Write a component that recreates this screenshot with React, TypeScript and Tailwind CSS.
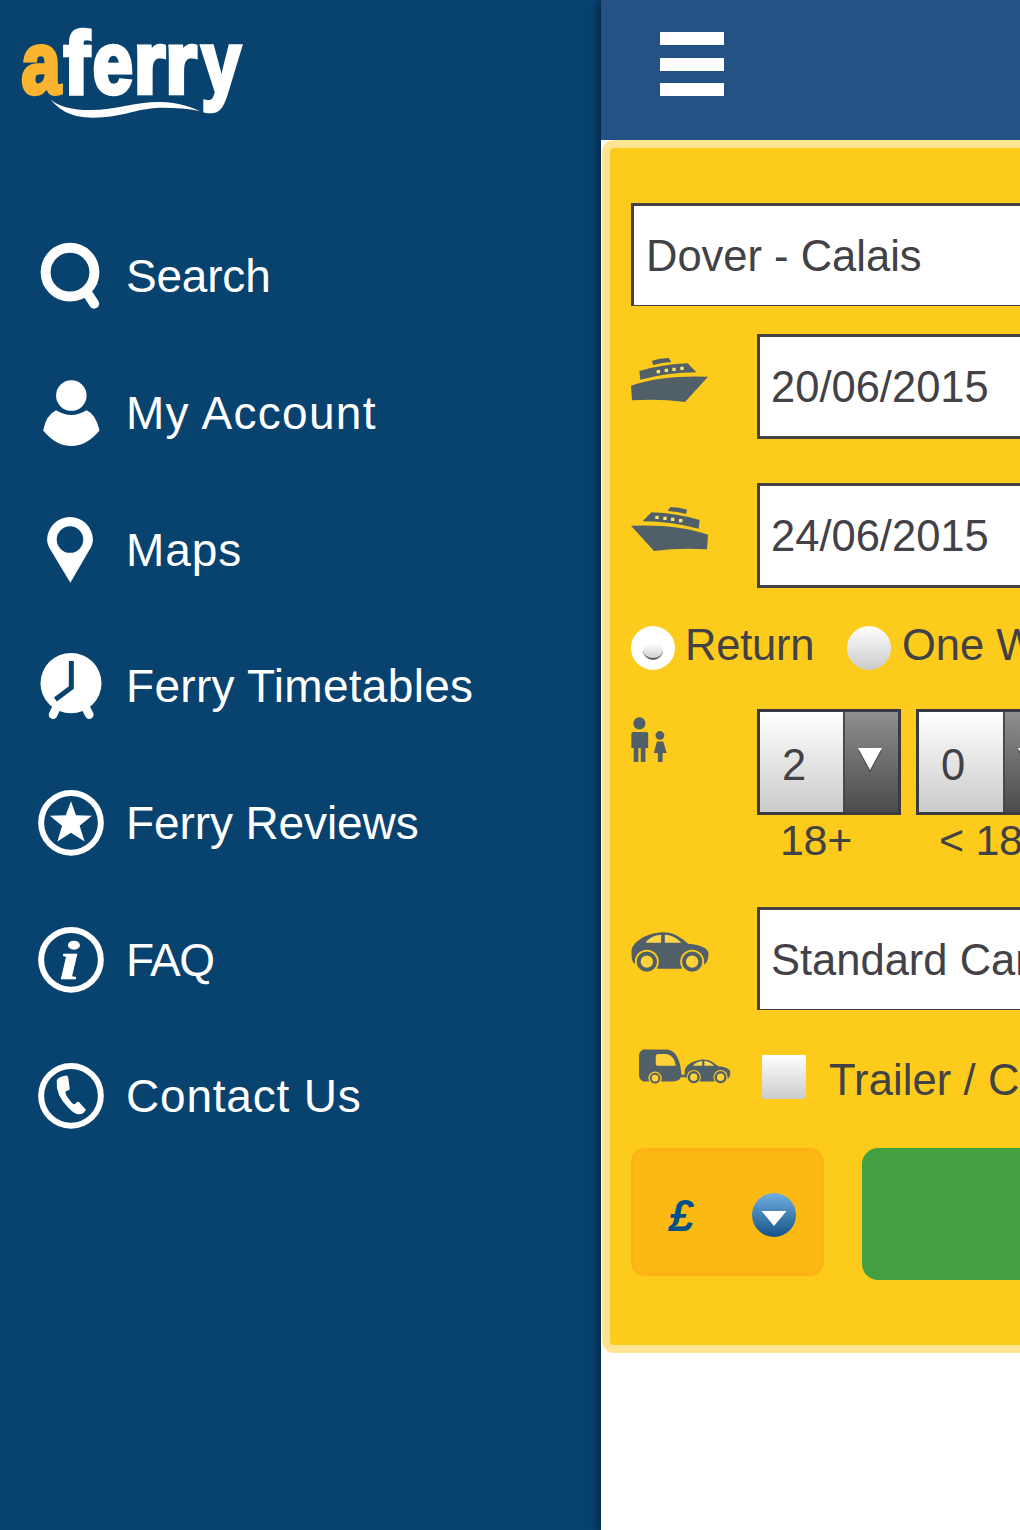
import type { ReactNode } from "react";

const menuItems = [
  { label: "Search", icon: SearchIcon, spacing: "tracking-[-0.2px]" },
  { label: "My Account", icon: AccountIcon, spacing: "tracking-[1.3px]" },
  { label: "Maps", icon: PinIcon, spacing: "tracking-[0.9px]" },
  { label: "Ferry Timetables", icon: ClockIcon, spacing: "tracking-[0.3px]" },
  { label: "Ferry Reviews", icon: StarIcon, spacing: "tracking-[-0.1px]" },
  { label: "FAQ", icon: InfoIcon, spacing: "tracking-[-1.5px]" },
  { label: "Contact Us", icon: PhoneIcon, spacing: "tracking-[0.8px]" },
];

const logoLetters = [
  { char: "a", x: 21.6, scale: 0.8, fill: "#fbb42f" },
  { char: "f", x: 63.8, scale: 0.88, fill: "#fff" },
  { char: "e", x: 92.8, scale: 0.82, fill: "#fff" },
  { char: "r", x: 133.8, scale: 0.92, fill: "#fff" },
  { char: "r", x: 165.2, scale: 0.92, fill: "#fff" },
  { char: "y", x: 201.6, scale: 0.8, fill: "#fff" },
];

function Logo() {
  return (
    <svg width="300" height="140" viewBox="0 0 300 140" className="block">
      <g
        fontFamily="Liberation Sans, sans-serif"
        fontWeight="bold"
        fontSize="88"
        strokeWidth="4.500"
      >
        {logoLetters.map((letter, index) => (
          <text
            key={index}
            transform={`translate(${letter.x} 92.5) scale(${letter.scale} 1)`}
            fill={letter.fill}
            stroke={letter.fill}
          >
            {letter.char}
          </text>
        ))}
      </g>
      <path
        d="M50.7 99.7Q63 110 90 110C117 110 133 102 160 102C180 102.500 190 107 200 111C187 108.500 173 107.500 160 107.700C133 109 123 117.500 93 117.700C70 117.300 60 110 50.700 99.700Z"
        fill="#fff"
      />
    </svg>
  );
}

function SearchIcon() {
  return (
    <svg
      viewBox="54 69 198 199"
      className="size-[66px] overflow-visible"
      fill="none"
      stroke="#fff"
    >
      <circle cx="150" cy="157" r="73.500" strokeWidth="30" />
      <path d="M200 217L223 252" strokeWidth="30" strokeLinecap="round" />
    </svg>
  );
}

function AccountIcon() {
  return (
    <svg viewBox="54 480 198 199" className="size-[66px]" fill="#fff">
      <circle cx="154" cy="527" r="46" />
      <path d="M108 571Q154 600 200 571Q228 583 239 632Q200 679 154 679Q108 679 69 632Q78 585 108 571Z" />
    </svg>
  );
}

function PinIcon() {
  return (
    <svg viewBox="54 49 198 199" className="size-[66px]" fill="#fff">
      <path
        fillRule="evenodd"
        d="M81 118A69 69 0 0 1 219 118Q219 132 207 151L151 247L93 151Q81 132 81 118ZM110 117A40 40 0 1 0 190 117A40 40 0 1 0 110 117Z"
      />
    </svg>
  );
}

function ClockIcon() {
  return (
    <svg viewBox="54 460 198 199" className="size-[66px]" fill="none">
      <path
        d="M110 622L99 646M196 622L208 646"
        stroke="#fff"
        strokeWidth="26"
        strokeLinecap="round"
      />
      <ellipse cx="153" cy="551" rx="92" ry="91" fill="#fff" />
      <path d="M154 484V564L106 600" stroke="#08426f" strokeWidth="15" />
    </svg>
  );
}

function Ring({ children }: { children: ReactNode }) {
  return (
    <svg viewBox="54 60 198 199" className="size-[66px]" fill="#fff">
      <circle cx="153" cy="159" r="90" fill="none" stroke="#fff" strokeWidth="18" />
      {children}
    </svg>
  );
}

function StarIcon() {
  return (
    <Ring>
      <path d="M153 94L168 136L216 138L179 168L194 215L153 189L112 215L126 168L89 138L137 136Z" />
    </Ring>
  );
}

function InfoIcon() {
  return (
    <Ring>
      <text
        x="118"
        y="218"
        fontFamily="Liberation Serif, serif"
        fontSize="164"
        fontWeight="bold"
        fontStyle="italic"
        textLength="61"
        lengthAdjust="spacingAndGlyphs"
        stroke="#fff"
        strokeWidth="2"
      >
        i
      </text>
    </Ring>
  );
}

function PhoneIcon() {
  return (
    <Ring>
      <path d="M139 98Q115 101 110 112Q106 157 145 195Q168 219 182 214Q192 213 198 201L176 177Q170 176 166 183Q160 187 155 179Q139 162 136 149Q137 143 144 143Q150 141 149 137L145 105Q143 98 139 98Z" />
    </Ring>
  );
}

function ShipIcon({ flipped = false }: { flipped?: boolean }) {
  return (
    <svg
      viewBox="93 115 231 132"
      className={flipped ? "mt-6 h-11 w-[77px] -scale-x-100" : "mt-6 h-11 w-[77px]"}
      fill="#515f68"
    >
      <path d="M156 123Q180 115 206 115L214 127Q185 129 159 136Z" />
      <path d="M118 154Q185 134 263 131L289 158Q200 159 121 180Z" />
      <path d="M93 198Q185 166 324 171L255 247Q175 236 96 242Z" />
      <path d="M170 151h10v10h-10zM194 147h10v10h-10zM217 144h10v10h-10zM241 141h10v10h-10z" fill="#ffe66b" />
    </svg>
  );
}

function PeopleIcon() {
  return (
    <svg viewBox="93 352 107 134" className="mt-2 h-[45px] w-9" fill="#515f68">
      <circle cx="118" cy="371" r="18" />
      <path d="M98 397H140Q144 397 144 402V444H136V486H122V444H115V486H101V444H94V402Q94 397 98 397Z" />
      <circle cx="179" cy="407" r="13" />
      <path d="M170 425H189L199 459H187V486H173V459H161Z" />
    </svg>
  );
}

function CarShape() {
  return (
    <g>
      <path
        d="M94 185C95 152 148 127 190 127C225 127 243 145 264 161C302 165 326 174 325 192Q324 216 314 222L240 236H175L105 222C94 216 94 200 94 185Z"
        fill="#515f68"
      />
      <path d="M136 158Q152 136 183 134V158ZM194 134Q220 134 244 158H194Z" fill="#ffd54a" />
      <circle cx="140" cy="215" r="36" fill="#fdcb1b" />
      <circle cx="276" cy="215" r="36" fill="#fdcb1b" />
      <circle cx="140" cy="215" r="24.500" fill="#ffd23a" stroke="#515f68" strokeWidth="12" />
      <circle cx="276" cy="215" r="24.500" fill="#ffd23a" stroke="#515f68" strokeWidth="12" />
    </g>
  );
}

function CarIcon() {
  return (
    <svg viewBox="93 126 233 120" className="mt-[25px] h-10 w-[78px]">
      <CarShape />
    </svg>
  );
}

function CaravanIcon() {
  return (
    <svg viewBox="118 476 275 104" className="-mt-[6px] ml-2 h-[35px] w-[92px]">
      <path
        d="M132 477H200C232 478 244 520 245 553H256V560H243Q238 573 215 573H132Q118 568 118 553V494Q120 480 132 477Z"
        fill="#515f68"
      />
      <path d="M176 491H200Q224 496 228 526H176Q168 526 168 518V499Q168 491 176 491Z" fill="#ffd23a" />
      <circle cx="166" cy="563" r="20" fill="#fdcb1b" />
      <circle cx="166" cy="563" r="13" fill="#ffd23a" stroke="#515f68" strokeWidth="6" />
      <g transform="translate(199 431) scale(0.59 0.6)">
        <CarShape />
      </g>
    </svg>
  );
}

function Field({ children }: { children: ReactNode }) {
  return (
    <div className="flex h-[105px] w-[300px] items-center border-[3px] border-[#434347] bg-white pt-[3px] pl-[11px] whitespace-nowrap">
      {children}
    </div>
  );
}

function CountSelect({ value, label, wide }: { value: string; label: string; wide?: boolean }) {
  return (
    <div className="w-36 shrink-0">
      <div className="flex h-[106px] border-[3px] border-[#3a3a42]">
        <div
          className={`flex shrink-0 items-center bg-linear-to-b from-white to-[#cbcbcb] pt-[7px] pl-[22px] ${
            wide ? "w-[84px]" : "w-[83px]"
          }`}
        >
          {value}
        </div>
        <div className="flex flex-1 justify-center border-l-2 border-[#4a4a4a] bg-linear-to-b from-[#8f8f8f] to-[#4c4c4c] pt-9 pr-[3px]">
          <svg viewBox="0 0 26 24" className="h-6 w-[26px]">
            <path d="M1 2H25L13 24Z" fill="#444" />
            <path d="M1 0H25L13 22Z" fill="#fff" />
          </svg>
        </div>
      </div>
      <div className="h-[52px] pl-[23px] text-[43px] leading-[50px] tracking-[-0.3px] whitespace-nowrap">
        {label}
      </div>
    </div>
  );
}

function Sidebar() {
  return (
    <aside className="h-full w-[601px] shrink-0 bg-[#08426f]">
      <Logo />
      <nav className="pt-[68px]">
        {menuItems.map((item) => (
          <a key={item.label} className="flex h-[136.700px] items-center pl-[38px]">
            <item.icon />
            <span
              className={`ml-[22px] text-[46px] leading-none whitespace-nowrap text-white ${item.spacing}`}
            >
              {item.label}
            </span>
          </a>
        ))}
      </nav>
    </aside>
  );
}

function SearchForm() {
  return (
    <form className="h-[1213px] w-[500px] rounded-[12px] border-8 border-[#ffe491] bg-[#fdcb1b] pt-[55px] pl-[21px] text-[43.500px] leading-none text-[#414146]">
      <div className="flex h-[103px] w-[450px] items-center border-[3px] border-b border-[#434347] bg-white pt-[3px] pl-3">
        Dover - Calais
      </div>
      <div className="mt-7 flex">
        <div className="w-[126px] shrink-0">
          <ShipIcon />
        </div>
        <Field>20/06/2015</Field>
      </div>
      <div className="mt-11 flex">
        <div className="w-[126px] shrink-0">
          <ShipIcon flipped />
        </div>
        <Field>24/06/2015</Field>
      </div>

      {/* Journey type */}
      <div className="mt-[38px] flex h-11 items-center whitespace-nowrap">
        <span className="flex size-11 shrink-0 items-center justify-center rounded-full bg-white">
          <span className="mt-1 size-5 rounded-full border-b-2 border-[#555] bg-linear-to-b from-white from-20% to-[#d0d0d0]" />
        </span>
        <span className="mb-[5px] w-[172px] shrink-0 pl-[10px] tracking-[-0.200px]">Return</span>
        <span className="size-11 shrink-0 rounded-full bg-linear-to-b from-white to-[#cbcbcb]" />
        <span className="mb-[5px] pl-[11px]">One Way</span>
      </div>

      {/* Passengers */}
      <div className="mt-[39px] flex">
        <div className="w-[126px] shrink-0">
          <PeopleIcon />
        </div>
        <div className="flex gap-[15px]">
          <CountSelect value="2" label="18+" />
          <CountSelect value="0" label="< 18" wide />
        </div>
      </div>

      {/* Vehicle */}
      <div className="mt-10 flex h-[103px]">
        <div className="w-[126px] shrink-0">
          <CarIcon />
        </div>
        <div className="flex w-[300px] items-center border-[3px] border-b border-[#434347] bg-white pt-[3px] pl-[11px] whitespace-nowrap">
          Standard Car
        </div>
      </div>
      <div className="mt-[45px] flex h-11">
        <div className="w-[131px] shrink-0">
          <CaravanIcon />
        </div>
        <span className="size-11 shrink-0 bg-linear-to-b from-white to-[#cbcbcb]" />
        <span className="pt-1 pl-[23px] tracking-[0.100px] whitespace-nowrap">Trailer / Caravan</span>
      </div>

      <div className="mt-[49px] flex items-start">
        <div className="flex h-32 w-[193px] shrink-0 items-center justify-between rounded-[14px] border-[3px] border-[#ffb017] bg-[#fdb913] pt-[6px] pr-[25px] pl-[35px]">
          <span className="pt-[3px] font-bold text-[#00508a] italic">£</span>
          <svg viewBox="0 0 44 44" className="size-11">
            <defs>
              <linearGradient id="arrow" x1="0" y1="0" x2="0" y2="1">
                <stop offset="0" stopColor="#6fafe0" />
                <stop offset="1" stopColor="#165287" />
              </linearGradient>
            </defs>
            <circle cx="22" cy="22" r="22" fill="url(#arrow)" />
            <path d="M9.500 18H34.500L22 33Z" fill="#fff" />
          </svg>
        </div>
        <div className="ml-[38px] h-[132px] w-[260px] rounded-2xl bg-[#43a040]" />
      </div>
    </form>
  );
}

export default function App() {
  return (
    <div className="flex h-[1530px] w-[1020px] overflow-hidden bg-white font-['Liberation_Sans',Arial,sans-serif]">
      <Sidebar />
      <main className="h-full w-[419px] shrink-0 bg-white shadow-[-1px_0_10px_1px_rgba(0,0,20,0.55)]">
        <header className="h-[140px] bg-[#245285] pt-8 pl-[59px]">
          <div className="flex w-16 flex-col gap-[12.500px]">
            <div className="h-[13px] bg-white" />
            <div className="h-[13px] bg-white" />
            <div className="h-[13px] bg-white" />
          </div>
        </header>
        <div className="overflow-hidden pl-px">
          <SearchForm />
        </div>
      </main>
    </div>
  );
}
